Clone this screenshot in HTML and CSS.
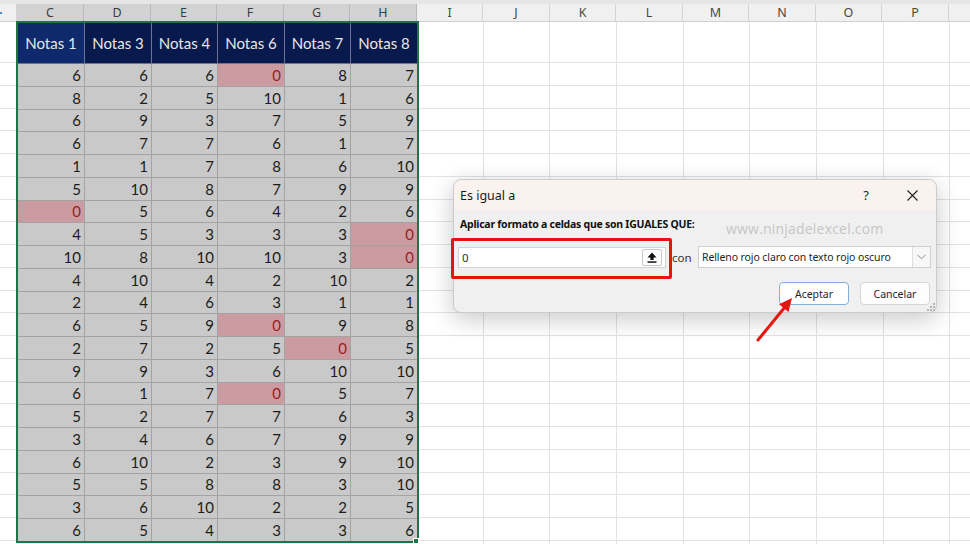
FILE: index.html
```html
<!DOCTYPE html>
<html lang="es">

<head>
    <meta charset="UTF-8">
    <title>Es igual a</title>
    <link rel="stylesheet" href="styles.css">
</head>

<body>

    <!-- Hoja de cálculo -->
    <div class="topbar"></div>

    <div class="colheads">
        <div class="ch w17"><span class="mark"></span></div>
        <div class="ch sel w67">C</div>
        <div class="ch sel w67">D</div>
        <div class="ch sel w66">E</div>
        <div class="ch sel w67">F</div>
        <div class="ch sel w66">G</div>
        <div class="ch sel w67">H</div>
        <div class="ch w66">I</div>
        <div class="ch w67">J</div>
        <div class="ch w66">K</div>
        <div class="ch w67">L</div>
        <div class="ch w66">M</div>
        <div class="ch w67">N</div>
        <div class="ch w66">O</div>
        <div class="ch w67">P</div>
        <div class="ch grow"></div>
    </div>

    <div class="sheet">
        <div class="blank colb">
            <div class="blank-head"></div>
            <div class="blank-rows"></div>
        </div>

        <div class="sel-wrap">
            <table class="notas">
                <colgroup>
                    <col style="width:67px">
                    <col style="width:67px">
                    <col style="width:66px">
                    <col style="width:67px">
                    <col style="width:66px">
                    <col style="width:67px">
                </colgroup>
                <thead>
                    <tr>
                        <th class="active">Notas 1</th>
                        <th>Notas 3</th>
                        <th>Notas 4</th>
                        <th>Notas 6</th>
                        <th>Notas 7</th>
                        <th>Notas 8</th>
                    </tr>
                </thead>
                <tbody>
                    <tr><td>6</td><td>6</td><td>6</td><td class="zero">0</td><td>8</td><td>7</td></tr>
                    <tr><td>8</td><td>2</td><td>5</td><td>10</td><td>1</td><td>6</td></tr>
                    <tr><td>6</td><td>9</td><td>3</td><td>7</td><td>5</td><td>9</td></tr>
                    <tr><td>6</td><td>7</td><td>7</td><td>6</td><td>1</td><td>7</td></tr>
                    <tr><td>1</td><td>1</td><td>7</td><td>8</td><td>6</td><td>10</td></tr>
                    <tr><td>5</td><td>10</td><td>8</td><td>7</td><td>9</td><td>9</td></tr>
                    <tr><td class="zero">0</td><td>5</td><td>6</td><td>4</td><td>2</td><td>6</td></tr>
                    <tr><td>4</td><td>5</td><td>3</td><td>3</td><td>3</td><td class="zero">0</td></tr>
                    <tr><td>10</td><td>8</td><td>10</td><td>10</td><td>3</td><td class="zero">0</td></tr>
                    <tr><td>4</td><td>10</td><td>4</td><td>2</td><td>10</td><td>2</td></tr>
                    <tr><td>2</td><td>4</td><td>6</td><td>3</td><td>1</td><td>1</td></tr>
                    <tr><td>6</td><td>5</td><td>9</td><td class="zero">0</td><td>9</td><td>8</td></tr>
                    <tr><td>2</td><td>7</td><td>2</td><td>5</td><td class="zero">0</td><td>5</td></tr>
                    <tr><td>9</td><td>9</td><td>3</td><td>6</td><td>10</td><td>10</td></tr>
                    <tr><td>6</td><td>1</td><td>7</td><td class="zero">0</td><td>5</td><td>7</td></tr>
                    <tr><td>5</td><td>2</td><td>7</td><td>7</td><td>6</td><td>3</td></tr>
                    <tr><td>3</td><td>4</td><td>6</td><td>7</td><td>9</td><td>9</td></tr>
                    <tr><td>6</td><td>10</td><td>2</td><td>3</td><td>9</td><td>10</td></tr>
                    <tr><td>5</td><td>5</td><td>8</td><td>8</td><td>3</td><td>10</td></tr>
                    <tr><td>3</td><td>6</td><td>10</td><td>2</td><td>2</td><td>5</td></tr>
                    <tr><td>6</td><td>5</td><td>4</td><td>3</td><td>3</td><td>6</td></tr>
                </tbody>
            </table>
            <span class="handle"></span>
        </div>

        <div class="blank rest">
            <div class="blank-head"></div>
            <div class="blank-rows"></div>
        </div>
    </div>

    <!-- Diálogo: Es igual a -->
    <div class="dialog">
        <div class="titlebar">
            <span class="title">Es igual a</span>
            <span class="tb-btn">?</span>
            <span class="tb-btn">
                <svg width="11" height="11" viewBox="0 0 11 11">
                    <path d="M0.5 0.5 L10.5 10.5 M10.5 0.5 L0.5 10.5" stroke="#1f1f1f" stroke-width="1.1" fill="none"/>
                </svg>
            </span>
        </div>

        <div class="dlg-body">
            <div class="dlg-label">Aplicar formato a celdas que son IGUALES QUE:</div>

            <div class="dlg-row">
                <div class="ref-input">
                    <span class="ref-value">0</span>
                    <span class="ref-btn">
                        <svg width="10" height="11" viewBox="0 0 10 11">
                            <path d="M5 0.5 L9.5 5.5 L6.6 5.5 L6.6 8 L3.4 8 L3.4 5.5 L0.5 5.5 Z" fill="#111"/>
                            <rect x="0.5" y="9.3" width="9" height="1.5" fill="#111"/>
                        </svg>
                    </span>
                </div>
                <span class="con">con</span>
                <div class="select">
                    <span class="select-text">Relleno rojo claro con texto rojo oscuro</span>
                    <span class="select-arrow">
                        <svg width="9" height="6" viewBox="0 0 9 6">
                            <path d="M0.5 0.8 L4.5 4.8 L8.5 0.8" stroke="#8a8a8a" stroke-width="1" fill="none"/>
                        </svg>
                    </span>
                </div>
            </div>

            <div class="dlg-buttons">
                <button class="btn primary">Aceptar</button>
                <button class="btn">Cancelar</button>
            </div>
        </div>

        <div class="watermark">www.ninjadelexcel.com</div>
        <div class="red-box"></div>
        <svg class="grip" width="9" height="9" viewBox="0 0 9 9">
            <rect x="7" y="1" width="2" height="2" fill="#b5b5b5"/>
            <rect x="4" y="4" width="2" height="2" fill="#b5b5b5"/>
            <rect x="7" y="4" width="2" height="2" fill="#b5b5b5"/>
            <rect x="1" y="7" width="2" height="2" fill="#b5b5b5"/>
            <rect x="4" y="7" width="2" height="2" fill="#b5b5b5"/>
            <rect x="7" y="7" width="2" height="2" fill="#b5b5b5"/>
        </svg>
    </div>

    <!-- Flecha roja -->
    <svg class="arrow" width="60" height="60" viewBox="0 0 60 60">
        <line x1="8" y1="50" x2="35" y2="17" stroke="#e8150f" stroke-width="3" stroke-linecap="round"/>
        <polygon points="42,8 38.5,21.9 29.1,14.3" fill="#e8150f"/>
    </svg>

</body>

</html>
```

FILE: styles.css
```css
/* General Reset */
* {
    margin: 0;
    padding: 0;
    box-sizing: border-box;
}

body {
    width: 970px;
    height: 544px;
    overflow: hidden;
    background-color: #ffffff;
    font-family: "Noto Sans", "Open Sans", sans-serif;
    color: #1f1f1f;
    position: relative;
}

/* Column headers */
.topbar {
    height: 4px;
    background-color: #e6e6e6;
}

.colheads {
    display: flex;
    height: 18px;
    background-color: #f0f0f0;
    border-bottom: 1px solid #d0d0d0;
}

.ch {
    flex: none;
    height: 100%;
    border-right: 1px solid #d4d4d4;
    font-size: 12.5px;
    line-height: 17px;
    text-align: center;
    color: #474747;
    position: relative;
}

.ch.sel {
    background-color: #d2d2d2;
    border-right-color: #b9b9b9;
    color: #3d3d3d;
}

.ch.grow {
    flex: 1;
    border-right: none;
}

.ch .mark {
    position: absolute;
    left: 0;
    top: 8px;
    width: 2px;
    height: 2px;
    background-color: #4a8ad6;
}

.w17 { width: 17px; }
.w66 { width: 66px; }
.w67 { width: 67px; }

/* Sheet area */
.sheet {
    display: flex;
    height: 522px;
}

.blank {
    display: flex;
    flex-direction: column;
}

.colb {
    width: 17px;
}

.rest {
    flex: 1;
    background-image: repeating-linear-gradient(to right, transparent 0, transparent 65.67px, #e2e2e2 65.67px, #e2e2e2 66.67px);
}

.blank-head {
    height: 41px;
    flex: none;
    border-bottom: 1px solid #e2e2e2;
}

.blank-rows {
    flex: 1;
    background-image: repeating-linear-gradient(to bottom, transparent 0, transparent 21.76px, #e2e2e2 21.76px, #e2e2e2 22.76px);
}

/* Notas table */
.sel-wrap {
    position: relative;
    width: 400px;
    flex: none;
}

.notas {
    width: 400px;
    table-layout: fixed;
    border-collapse: collapse;
    font-family: Lato, "Liberation Sans", sans-serif;
    font-size: 15px;
    outline: 2px solid #217346;
    outline-offset: -1px;
}

.notas th {
    height: 41px;
    background-color: #081a4d;
    color: #e6e6e6;
    font-weight: normal;
    border: 1px solid #6d7490;
    text-align: center;
    vertical-align: middle;
}

.notas th.active {
    background-color: #0f2a6c;
}

.notas td {
    height: 22.76px;
    background-color: #c9c9c9;
    color: #1c1c1c;
    border: 1px solid #a3a3a3;
    text-align: right;
    vertical-align: bottom;
    padding: 0 3px 1px 0;
    line-height: 19px;
}

.notas td.zero {
    background-color: #cc9ba1;
    color: #9c1c25;
}

.handle {
    position: absolute;
    left: 396px;
    top: 516px;
    width: 6px;
    height: 6px;
    background-color: #217346;
    border: 1px solid #ffffff;
}

/* Dialog */
.dialog {
    position: absolute;
    left: 453px;
    top: 179px;
    width: 484px;
    height: 134px;
    background-color: #f0f0f0;
    border: 1px solid #cbcbcb;
    border-radius: 8px;
    box-shadow: 0 6px 24px rgba(0, 0, 0, 0.22);
}

.titlebar {
    display: flex;
    align-items: center;
    height: 30px;
    padding-left: 6px;
    background-color: #f9f2ef;
    border-radius: 8px 8px 0 0;
}

.title {
    flex: 1;
    font-size: 12.5px;
    color: #1a1a1a;
}

.tb-btn {
    width: 46px;
    text-align: center;
    font-size: 13px;
    color: #1f1f1f;
    display: flex;
    justify-content: center;
    align-items: center;
}

.tb-btn:last-child {
    margin-right: 1px;
}

.dlg-body {
    padding: 6px 5px 0 4px;
}

.dlg-label {
    padding-left: 2px;
    font-size: 10.5px;
    font-weight: bold;
    line-height: 16px;
    letter-spacing: -0.25px;
    color: #111;
}

.dlg-row {
    display: flex;
    align-items: center;
    margin-top: 14px;
    height: 22px;
}

.ref-input {
    width: 208px;
    height: 21px;
    background-color: #ffffff;
    border: 1px solid #d2d2d2;
    display: flex;
    align-items: center;
    justify-content: space-between;
    padding: 0 3px 0 3px;
}

.ref-value {
    font-size: 11.5px;
    color: #333;
}

.ref-btn {
    width: 20px;
    height: 17px;
    border: 1px solid #c9c9c9;
    border-radius: 2px;
    background-color: #ffffff;
    display: flex;
    align-items: center;
    justify-content: center;
}

.con {
    margin-left: 6px;
    font-size: 11.5px;
    color: #333;
    width: 26px;
}

.select {
    width: 233px;
    height: 22px;
    background-color: #ffffff;
    border: 1px solid #cfcfcf;
    display: flex;
    align-items: center;
    justify-content: space-between;
    padding-left: 3px;
}

.select-text {
    font-size: 10.5px;
    letter-spacing: -0.1px;
    color: #1f1f1f;
}

.select-arrow {
    width: 18px;
    height: 20px;
    border-left: 1px solid #dedede;
    background-color: #f7f7f7;
    display: flex;
    align-items: center;
    justify-content: center;
}

.dlg-buttons {
    display: flex;
    justify-content: flex-end;
    gap: 11px;
    margin-top: 14px;
    padding-right: 1px;
}

.btn {
    width: 70px;
    height: 23px;
    font-family: "Noto Sans", "Open Sans", sans-serif;
    font-size: 10.5px;
    color: #1f1f1f;
    background-color: #fdfdfd;
    border: 1px solid #d6d6d6;
    border-radius: 4px;
}

.btn.primary {
    border: 1.5px solid #7fb0df;
    background-color: #ffffff;
}

.watermark {
    position: absolute;
    left: 272px;
    top: 39px;
    font-family: "Open Sans", sans-serif;
    font-size: 14px;
    letter-spacing: 0.2px;
    color: #c6c6c6;
}

.red-box {
    position: absolute;
    left: -3px;
    top: 58px;
    width: 221px;
    height: 41px;
    border: 3px solid #e8130f;
    border-radius: 2px;
}

.grip {
    position: absolute;
    right: 1px;
    bottom: 1px;
}

/* Arrow */
.arrow {
    position: absolute;
    left: 750px;
    top: 290px;
}
```
